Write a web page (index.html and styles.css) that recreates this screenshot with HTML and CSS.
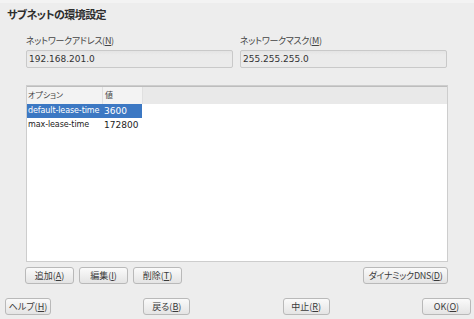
FILE: index.html
```html
<!DOCTYPE html>
<html lang="ja">
<head>
    <meta charset="UTF-8">
    <title>サブネットの環境設定</title>
    <link rel="stylesheet" href="styles.css">
</head>
<body>
    <div class="dialog">
        <h1 class="title">サブネットの環境設定</h1>

        <div class="fields">
            <div class="field">
                <label>ネットワークアドレス(<u>N</u>)</label>
                <div class="entry">192.168.201.0</div>
            </div>
            <div class="field">
                <label>ネットワークマスク(<u>M</u>)</label>
                <div class="entry">255.255.255.0</div>
            </div>
        </div>

        <div class="list">
            <div class="list-head">
                <div class="col col-name">オプション</div>
                <div class="col col-value">値</div>
                <div class="col-rest"></div>
            </div>
            <div class="row selected">
                <div class="col-name">default-lease-time</div>
                <div class="col-value">3600</div>
            </div>
            <div class="row">
                <div class="col-name">max-lease-time</div>
                <div class="col-value">172800</div>
            </div>
        </div>

        <div class="actions">
            <div class="group">
                <button class="btn">追加(<u>A</u>)</button>
                <button class="btn">編集(<u>I</u>)</button>
                <button class="btn">削除(<u>T</u>)</button>
            </div>
            <button class="btn btn-dns">ダイナミックDNS(<u>D</u>)</button>
        </div>

        <div class="footer">
            <button class="btn btn-help">ヘルプ(<u>H</u>)</button>
            <button class="btn">戻る(<u>B</u>)</button>
            <button class="btn">中止(<u>R</u>)</button>
            <button class="btn btn-ok">OK(<u>O</u>)</button>
        </div>
    </div>
</body>
</html>
```

FILE: styles.css
```css
body {
    margin: 0;
    background: #ededed;
    font-family: "DejaVu Sans", "Noto Sans CJK JP", sans-serif;
    color: #333;
}

.dialog {
    width: 474px;
    height: 319px;
    display: flex;
    flex-direction: column;
    border-top: 3px solid #f3f3f3;
    box-sizing: border-box;
}

.title {
    font-family: "Noto Sans CJK JP", sans-serif;
    font-feature-settings: "palt";
    font-size: 11px;
    letter-spacing: -0.6px;
    font-weight: bold;
    line-height: 14px;
    color: #2e2e2e;
    margin: 4px 0 0 7px;
}

.fields {
    display: grid;
    grid-template-columns: 207px 207px;
    gap: 7px;
    margin: 14px 0 0 26px;
}

.field label {
    display: block;
    font-family: "Noto Sans CJK JP", sans-serif;
    font-feature-settings: "palt";
    font-size: 9px;
    letter-spacing: -0.3px;
    line-height: 12px;
    color: #444;
    margin-bottom: 3px;
}

.entry {
    height: 18px;
    box-sizing: border-box;
    border: 1px solid #c9c9c9;
    border-radius: 2px;
    background: linear-gradient(#e4e4e4, #ebebeb 4px);
    font-size: 9px;
    line-height: 16px;
    padding-left: 2px;
    color: #333;
}

.list {
    margin: 17px 0 0 26px;
    width: 422px;
    height: 177px;
    box-sizing: border-box;
    background: #fff;
    border: 1px solid #cdcdcd;
    font-size: 8px;
}

.list-head {
    display: flex;
    height: 17px;
    border-top: 1px solid #bdbdbd;
    background: #e9e9e9;
    font-family: "Noto Sans CJK JP", sans-serif;
    font-feature-settings: "palt";
    line-height: 16px;
    color: #444;
}

.list-head .col {
    background: #f3f3f3;
    border-right: 1px solid #e0e0e0;
}

.col-name {
    width: 74px;
    padding-left: 1px;
    white-space: nowrap;
}

.col-value {
    width: 37px;
    padding-left: 2px;
    white-space: nowrap;
}

.row {
    display: flex;
    height: 14px;
    line-height: 14px;
    color: #222;
}

.row .col-name {
    letter-spacing: -0.1px;
}

.row .col-value {
    font-size: 9px;
}

.row.selected {
    width: 115px;
    background: #3c78c3;
    color: #fff;
}

.actions {
    display: flex;
    justify-content: space-between;
    margin: 5px 26px 0 25px;
}

.group {
    display: flex;
    gap: 5px;
}

.btn {
    height: 17px;
    padding: 0 2px;
    width: 49px;
    border: 1px solid #b9b9b9;
    border-radius: 3px;
    background: linear-gradient(#fafafa, #e4e4e4);
    font-family: "Noto Sans CJK JP", sans-serif;
    font-feature-settings: "palt";
    font-size: 9px;
    line-height: 15px;
    color: #3a3a3a;
    white-space: nowrap;
}

.btn u {
    text-underline-offset: 1px;
}

.btn-dns {
    width: 85px;
    letter-spacing: -0.3px;
}

.footer {
    display: flex;
    justify-content: space-between;
    margin: 14px 3px 0 5px;
}

.footer .btn {
    width: 47px;
}

.footer .btn-help {
    width: 46px;
}

.footer .btn-ok {
    width: 49px;
}
```
